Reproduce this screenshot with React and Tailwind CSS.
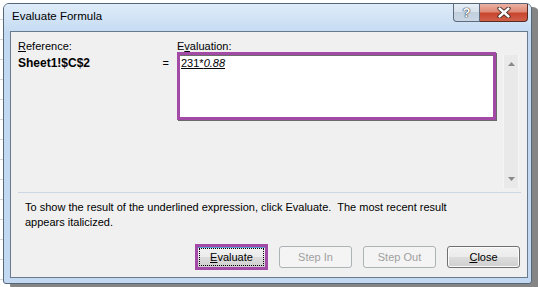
import React from "react";

const font = { fontFamily: '"Liberation Sans", Arial, sans-serif' };

function Btn({ children, disabled }) {
  if (disabled) {
    return (
      <div className="w-[73px] h-[22px] rounded-[3px] border border-[#adb2b5] bg-[#f4f4f4] flex items-center justify-center text-[11px] text-[#a0a0a0]">
        {children}
      </div>
    );
  }
  return (
    <div className="w-[73px] h-[22px] rounded-[3px] border border-[#707070] bg-[linear-gradient(#f2f2f2_0%,#ebebeb_50%,#dddddd_50%,#cfcfcf_100%)] shadow-[inset_0_0_0_1px_#fbfbfb] flex items-center justify-center text-[11px] text-black">
      {children}
    </div>
  );
}

export default function App() {
  return (
    <div
      style={font}
      className="w-[538px] h-[287px] overflow-hidden bg-white bg-[repeating-linear-gradient(to_bottom,transparent_0px,transparent_19px,#d6d6d6_19px,#d6d6d6_20px)] pt-[3px] pl-[3px]"
    >
      <div className="w-[529px] h-[281px] border border-[#55687b] rounded-t-[6px] rounded-b-[3px] bg-[#c2d9f1] flex flex-col shadow-[7px_4px_0_0_#858585]">
        {/* title bar */}
        <div className="h-[27px] flex justify-between rounded-t-[5px] bg-[linear-gradient(to_bottom,#dfecf9,#c6dcf3)] pl-[8px] pr-[3px]">
          <div className="self-center text-[11.5px] text-black leading-none pb-[1px]">Evaluate Formula</div>
          <div className="flex self-start">
            <div className="w-[27px] h-[18px] border border-t-0 border-[#5d6b7c] rounded-bl-[4px] bg-[linear-gradient(#e6edf5_0%,#d6e0eb_50%,#c2cfdd_50%,#cbd7e4_100%)] flex items-center justify-center">
              <span
                className="text-[13px] font-bold text-white leading-none"
                style={{ textShadow: "0 0 1px #2d3640, 0 0 1px #2d3640, 0 0 1px #2d3640" }}
              >
                ?
              </span>
            </div>
            <div className="w-[48px] h-[18px] border border-t-0 border-l-0 border-[#5a2a22] rounded-br-[4px] bg-[linear-gradient(#ecb0a2_0%,#de8a77_45%,#c9452e_55%,#d0604a_100%)] flex items-center justify-center">
              <svg width="14" height="11" viewBox="0 0 14 11">
                <path d="M2.5 1.5 L11.5 9.5 M11.5 1.5 L2.5 9.5" stroke="#3a2420" strokeWidth="4.2" strokeLinecap="round" />
                <path d="M2.5 1.5 L11.5 9.5 M11.5 1.5 L2.5 9.5" stroke="#ffffff" strokeWidth="2.4" strokeLinecap="round" />
              </svg>
            </div>
          </div>
        </div>
        {/* frame body */}
        <div className="flex-1 pl-[6px] pr-[3px] pb-[5px] flex">
          <div className="flex-1 border border-[#687b8e] bg-[#f0f0f0] pt-[8px] pl-[7px] pr-[7px] flex flex-col text-[11px] text-black">
            <div className="flex">
              <div className="w-[159px] flex flex-col">
                <div className="h-[12px] leading-[12px]">
                  <span className="underline">R</span>eference:
                </div>
                <div className="mt-[4px] h-[14px] flex justify-between items-center pr-[8px]">
                  <span className="font-bold text-[12px]">Sheet1!$C$2</span>
                  <span>=</span>
                </div>
              </div>
              <div className="flex flex-col">
                <div className="h-[12px] leading-[12px]">
                  E<span className="underline">v</span>aluation:
                </div>
                <div className="flex gap-[7px]">
                  <div className="w-[319px] h-[68px] border-[3px] border-[#a34aa6] bg-white shadow-[1px_1px_0_0_#6a6a6a]">
                    <div className="h-full border-t border-[#6d6d6d] pl-[1px] pt-[1px] leading-[13px]">
                      <span className="underline">
                        231*<i>0.88</i>
                      </span>
                    </div>
                  </div>
                  <div className="w-[16px] h-[133px] mt-[3px] bg-[#e9e9e9] border-l border-r border-[#f5f5f5] flex flex-col justify-between items-center py-[7px]">
                    <svg width="7" height="4" viewBox="0 0 7 4">
                      <path d="M0 4 L3.5 0 L7 4 Z" fill="#8a8a8a" />
                    </svg>
                    <svg width="7" height="4" viewBox="0 0 7 4">
                      <path d="M0 0 L7 0 L3.5 4 Z" fill="#8a8a8a" />
                    </svg>
                  </div>
                </div>
              </div>
            </div>
            <div className="mt-[4px] h-px bg-[#cbd7e3] mr-[-1px]" />
            <div className="mt-[7px] ml-[7px] leading-[15px] whitespace-pre">
              {"To show the result of the underlined expression, click Evaluate.  The most recent result\nappears italicized."}
            </div>
            <div className="mt-[14px] flex justify-end items-center gap-[11px]">
              <div className="w-[73px] h-[26px] border-[3px] border-[#a34aa6] bg-[linear-gradient(#f2f2f2_0%,#ebebeb_50%,#dddddd_50%,#cfcfcf_100%)] shadow-[inset_0_1px_0_0_#5aa0d0]">
                <div className="m-[1px] h-[18px] border border-dotted border-black flex items-center justify-center text-[11px]">
                  <span>
                    <span className="underline">E</span>valuate
                  </span>
                </div>
              </div>
              <Btn disabled>Step In</Btn>
              <Btn disabled>Step Out</Btn>
              <Btn>
                <span>
                  <span className="underline">C</span>lose
                </span>
              </Btn>
            </div>
          </div>
        </div>
      </div>
    </div>
  );
}
